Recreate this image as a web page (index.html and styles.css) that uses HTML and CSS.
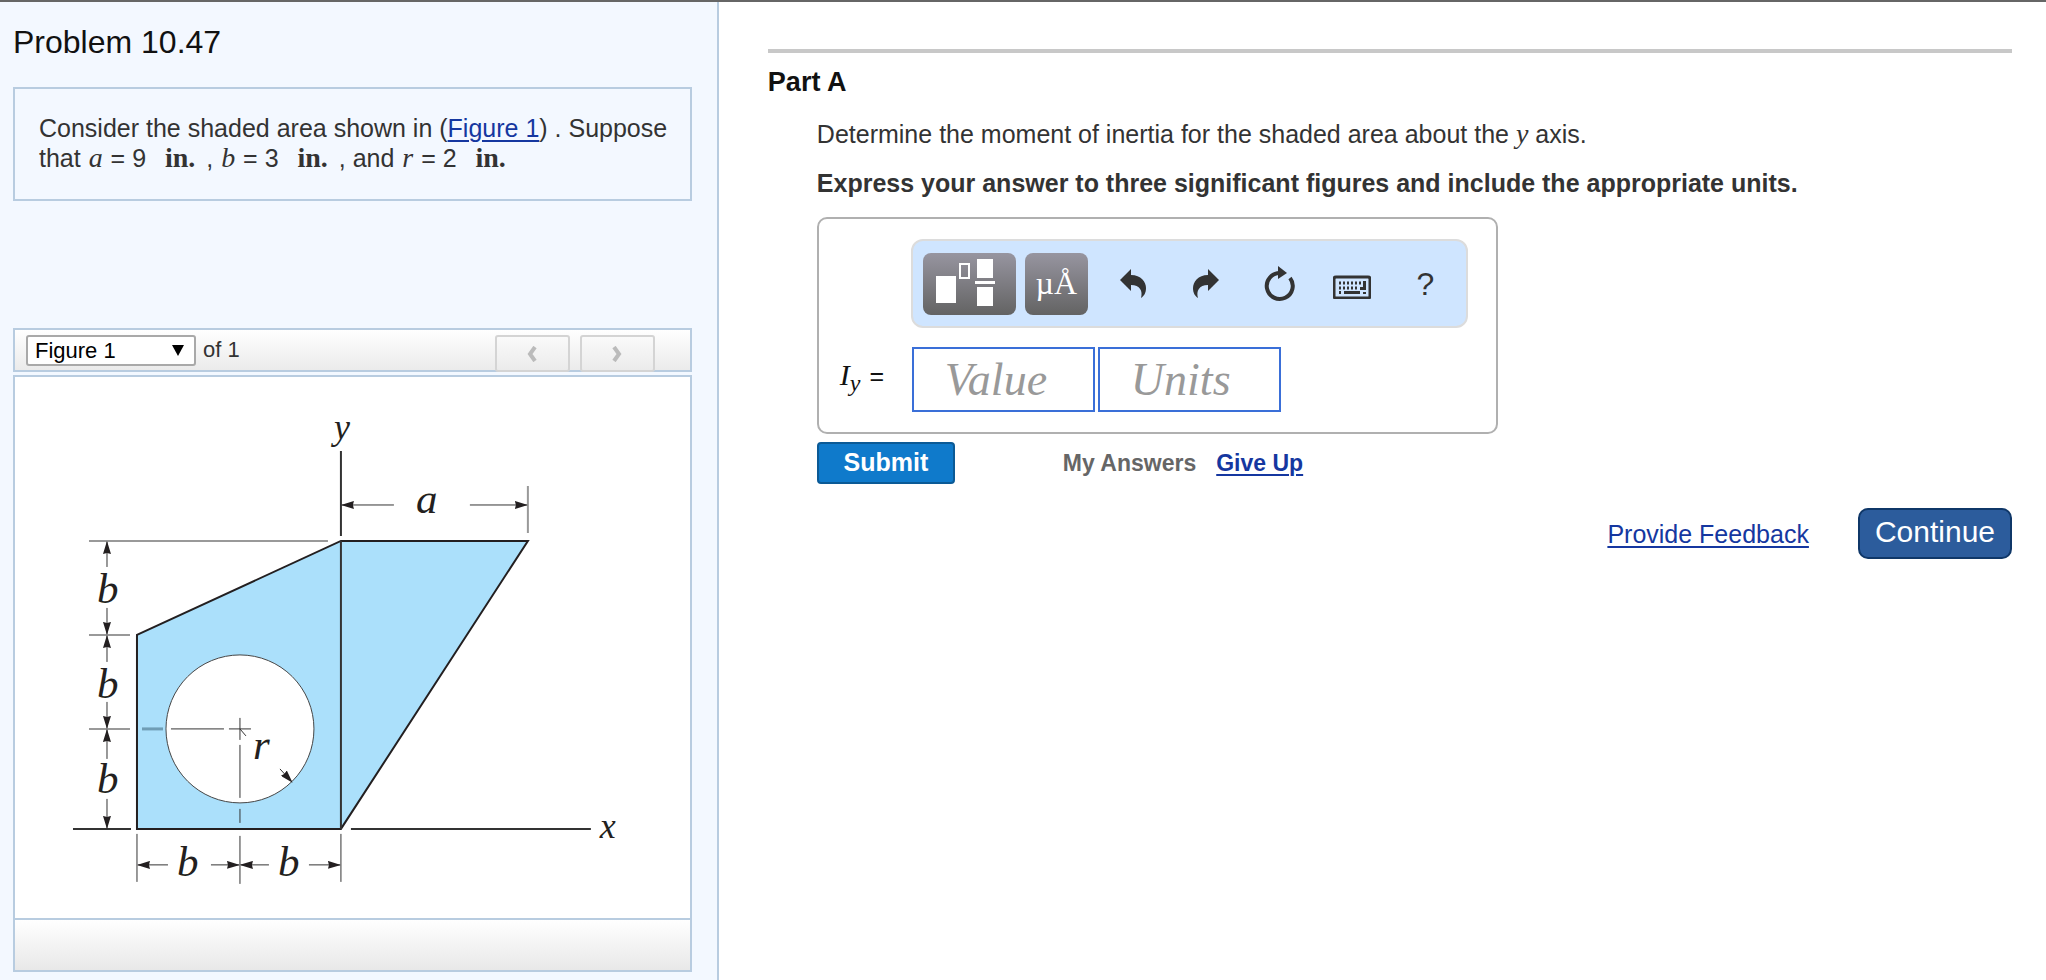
FILE: index.html
```html
<!DOCTYPE html>
<html lang="en">

<head>
    <meta charset="UTF-8">
    <meta name="viewport" content="width=device-width, initial-scale=1.0">
    <title>Problem 10.47</title>
    <link rel="stylesheet" href="styles.css">
</head>

<body>

    <div class="page">

        <aside class="problem">
            <h1>Problem 10.47</h1>

            <div class="statement">
                Consider the shaded area shown in (<a href="#figure">Figure 1</a>) . Suppose that
                <i>a</i> = 9 &nbsp;<b>in.</b> , <i>b</i> = 3 &nbsp;<b>in.</b> , and <i>r</i> = 2 &nbsp;<b>in.</b>
            </div>

            <div class="figure-bar">
                <div class="figure-select">
                    <select id="figureNumber" aria-label="Figure">
                        <option>Figure 1</option>
                    </select>
                </div>
                <label for="figureNumber">of 1</label>
                <div class="figure-nav">
                    <button type="button" aria-label="Previous figure" disabled>
                        <svg width="10" height="16" viewBox="0 0 10 16"><path d="M8 1L3 8l5 7" /></svg>
                    </button>
                    <button type="button" aria-label="Next figure" disabled>
                        <svg width="10" height="16" viewBox="0 0 10 16"><path d="M2 1l5 7-5 7" /></svg>
                    </button>
                </div>
            </div>

            <div class="figure" id="figure">
                <svg class="drawing" viewBox="15 378 675 541">
                    <defs>
                        <marker id="arrow" markerUnits="userSpaceOnUse" markerWidth="13" markerHeight="8" refX="12" refY="4" orient="auto-start-reverse">
                            <path d="M0 0L13 4L0 8L1 4z" fill="#231f20" />
                        </marker>
                    </defs>

                    <!-- shaded area -->
                    <path class="area" d="M137 636L341 542H528L341 830H137z" />
                    <path class="edge" d="M341 542V830" />
                    <circle class="hole" cx="240" cy="730" r="74" />

                    <!-- axes -->
                    <path class="axis" d="M341 452V537M73 830H131M351 830H591" />

                    <!-- extension lines -->
                    <path class="ext" d="M89 542H328M89 636H130M89 730H130M528 487V534" />
                    <path class="thin" d="M137 835V883M240 837V885M341 835V883" />

                    <!-- centre lines -->
                    <path class="dash" d="M142 730H163" />
                    <path class="thin" d="M171 730H224M229 730H251M240 719V741M240 746V799M240 810V824M240 730L246 737" />

                    <!-- dimensions -->
                    <g class="dim">
                        <path d="M394 506H342" />
                        <path d="M470 506H527" />
                        <path d="M107 568V543" />
                        <path d="M107 609V635" />
                        <path d="M107 663V637" />
                        <path d="M107 703V729" />
                        <path d="M107 760V731" />
                        <path d="M107 800V829" />
                        <path d="M168 866H138" />
                        <path d="M211 866H239" />
                        <path d="M269 866H241" />
                        <path d="M309 866H340" />
                        <path d="M280 770L292 783" />
                    </g>

                    <g class="letters">
                        <text x="97" y="604">b</text>
                        <text x="97" y="699">b</text>
                        <text x="97" y="794">b</text>
                        <text x="177" y="877">b</text>
                        <text x="278" y="877">b</text>
                        <text x="416" y="514">a</text>
                        <text x="253" y="760">r</text>
                        <text class="small" x="334" y="440">y</text>
                        <text class="small" x="600" y="839">x</text>
                    </g>
                </svg>
                <div class="figure-footer"></div>
            </div>
        </aside>

        <main class="part">
            <h2>Part A</h2>

            <div class="part-body">
                <p>Determine the moment of inertia for the shaded area about the <i>y</i> axis.</p>
                <p><strong>Express your answer to three significant figures and include the appropriate units.</strong></p>

                <form>
                    <div class="answer">
                        <div class="toolbar">
                            <button type="button" class="template wide" aria-label="Templates">
                                <svg width="93" height="62" viewBox="0 0 93 62">
                                    <path fill="#fff" d="M13 23h20v27H13zM54 6h16v19H54zM54 34h16v19H54zM52 28h20v3H52z" />
                                    <rect x="37" y="11" width="9" height="14" fill="none" stroke="#fff" stroke-width="2" />
                                </svg>
                            </button>
                            <button type="button" class="template" aria-label="Symbols">µÅ</button>
                            <button type="button" class="tool" aria-label="Undo">
                                <svg width="26" height="30" viewBox="0 0 26 30">
                                    <path d="M0 11L11 0V6C21 6 26 13 26 19C26 24 24 27 21 29C23 22 20 16 11 16V22z" />
                                </svg>
                            </button>
                            <button type="button" class="tool" aria-label="Redo">
                                <svg width="26" height="30" viewBox="0 0 26 30">
                                    <path d="M26 11L15 0V6C5 6 0 13 0 19C0 24 2 27 5 29C3 22 6 16 15 16V22z" />
                                </svg>
                            </button>
                            <button type="button" class="tool" aria-label="Reset">
                                <svg width="32" height="36" viewBox="0 0 32 36">
                                    <path d="M17 7A13 13 0 1 0 27 12" fill="none" stroke="#333" stroke-width="4" />
                                    <path d="M15 0L24 7L15 13z" />
                                </svg>
                            </button>
                            <button type="button" class="tool low" aria-label="Keyboard">
                                <svg width="38" height="24" viewBox="0 0 38 24">
                                    <rect x="1" y="2" width="36" height="21" rx="2" fill="none" stroke="#333" stroke-width="3" />
                                    <path d="M6 8H28M6 13H26" fill="none" stroke="#333" stroke-width="3" stroke-dasharray="2 2" />
                                    <path d="M30 6h3v9h-6v-3h3zM6 16h2v3H6zM11 16h16v3H11zM30 17h3v2h-3z" />
                                </svg>
                            </button>
                            <button type="button" class="tool" aria-label="Help">?</button>
                        </div>
                        <div class="fields">
                            <label for="value"><i>I<sub>y</sub></i> =</label>
                            <input type="text" id="value" placeholder="Value">
                            <input type="text" id="units" placeholder="Units" aria-label="Units">
                        </div>
                    </div>

                    <div class="actions">
                        <button type="submit" class="submit">Submit</button>
                        <span class="my-answers">My Answers</span>
                        <a href="#">Give Up</a>
                    </div>
                </form>
            </div>

            <div class="bottom">
                <a href="#">Provide Feedback</a>
                <button type="button" class="continue">Continue</button>
            </div>
        </main>

    </div>

</body>

</html>
```

FILE: styles.css
```css
* {
    box-sizing: border-box;
}

body {
    margin: 0;
    font-family: "Liberation Sans", Arial, sans-serif;
    font-size: 25px;
    line-height: 30px;
    color: #333;
    background-color: #fff;
}

a {
    color: #1537a0;
    text-decoration-thickness: 2px;
    text-underline-offset: 3px;
}

i,
.statement b {
    font-family: "Liberation Serif", "Times New Roman", serif;
    font-size: 28px;
    line-height: 24px;
}

.statement i {
    margin: 0 1px;
}

.statement b {
    margin: 0 4px 0 5px;
}

button {
    font-family: inherit;
    cursor: pointer;
}

.page {
    display: grid;
    grid-template-columns: 13fr 24fr;
    min-height: 100vh;
    border-top: 2px solid #666;
}

/* left side */

.problem {
    padding: 22px 25px 6px 13px;
    background-color: #f3f8ff;
    border-right: 2px solid #b8cce0;
}

h1 {
    margin: 0 0 27px;
    font-size: 32px;
    line-height: 36px;
    font-weight: normal;
    color: #111;
}

.statement {
    margin-bottom: 127px;
    padding: 24px 20px 26px 24px;
    border: 2px solid #b8cce0;
}

.figure-bar {
    display: flex;
    align-items: flex-start;
    height: 44px;
    margin-bottom: 3px;
    padding: 5px 35px 0 11px;
    font-size: 22px;
    border: 2px solid #b8cce0;
    background: linear-gradient(#fff, #ebebeb);
}

.figure-select {
    position: relative;
    margin-right: 7px;
}

.figure-select select {
    display: block;
    width: 170px;
    height: 31px;
    padding: 0 7px;
    font-family: inherit;
    font-size: 22px;
    color: #000;
    appearance: none;
    background-color: #fff;
    border: 2px solid #a9a9a9;
    border-radius: 3px;
}

.figure-select::after {
    content: "";
    position: absolute;
    top: 10px;
    right: 12px;
    border: 6px solid transparent;
    border-top: 11px solid #000;
    border-bottom: 0;
    pointer-events: none;
}

.figure-nav {
    display: flex;
    gap: 10px;
    margin-left: auto;
}

.figure-nav button {
    width: 75px;
    height: 37px;
    padding: 4px 0 0;
    border: 2px solid #d4d4d4;
    border-radius: 3px;
    background: linear-gradient(#fafafa, #ebebeb);
}

.figure-nav svg {
    fill: none;
    stroke: #bbb;
    stroke-width: 4;
}

.figure {
    border: 2px solid #b8cce0;
    background-color: #fff;
}

.figure-footer {
    height: 52px;
    border-top: 2px solid #b8cce0;
    background: linear-gradient(#fff, #e8e8e8);
}

/* drawing */

.drawing {
    display: block;
    width: 100%;
}

.area {
    fill: #abe0fb;
    stroke: #231f20;
    stroke-width: 2;
}

.edge,
.axis {
    fill: none;
    stroke: #333;
    stroke-width: 2;
}

.hole {
    fill: #fff;
    stroke: #444;
    stroke-width: 1;
}

.ext {
    stroke: #999;
    stroke-width: 2;
}

.dash {
    stroke: #6f9db5;
    stroke-width: 3;
}

.thin,
.dim {
    stroke: #333;
    stroke-width: 1;
}

.dim path {
    marker-end: url(#arrow);
}

.letters {
    font-family: "Liberation Serif", "Times New Roman", serif;
    font-style: italic;
    font-size: 43px;
    fill: #231f20;
}

.letters .small {
    font-size: 36px;
}

/* right side */

.part {
    padding: 47px 34px 0 49px;
}

h2 {
    margin: 0;
    padding-top: 14px;
    font-size: 27px;
    line-height: 30px;
    color: #111;
    border-top: 4px solid #c8c8c8;
}

.part-body {
    padding: 22px 0 0 49px;
}

p {
    margin: 0 0 19px;
}

.answer {
    width: 681px;
    max-width: 100%;
    margin-bottom: 8px;
    padding: 20px 28px 20px 21px;
    border: 2px solid #b0b0b0;
    border-radius: 10px;
}

.toolbar {
    display: flex;
    align-items: center;
    height: 89px;
    margin: 0 0 19px 71px;
    padding: 0 4px 0 10px;
    border: 2px solid #dcdcdc;
    border-radius: 12px;
    background-color: #cfe5ff;
}

.template {
    width: 63px;
    height: 62px;
    margin-right: 9px;
    padding: 0;
    border: 0;
    border-radius: 8px;
    font-family: "Liberation Serif", serif;
    font-size: 32px;
    color: #fff;
    background: linear-gradient(#9795a0, #636363);
}

.template.wide {
    width: 93px;
}

.template svg {
    display: block;
}

.tool {
    display: flex;
    flex: 1;
    align-items: center;
    justify-content: center;
    padding: 0;
    border: 0;
    font-size: 32px;
    line-height: 32px;
    color: #333;
    background: none;
}

.tool.low {
    padding-top: 6px;
}

.tool svg {
    fill: #333;
}

.fields {
    display: flex;
    align-items: center;
}

.fields label {
    width: 72px;
    padding-bottom: 8px;
    color: #111;
}

.fields label i {
    margin-right: 2px;
    font-size: 30px;
}

.fields sub {
    font-size: 24px;
    line-height: 0;
    vertical-align: -6px;
}

.fields input {
    width: 183px;
    height: 65px;
    margin-right: 3px;
    padding: 0 31px;
    border: 2px solid #3a6fd8;
    font-family: "Liberation Serif", "Times New Roman", serif;
    font-style: italic;
    font-size: 46px;
}

.fields input::placeholder {
    color: #999;
}

.actions {
    display: flex;
    align-items: center;
    font-size: 23px;
    font-weight: bold;
}

.submit {
    width: 138px;
    height: 42px;
    margin-right: 108px;
    padding: 0 0 2px;
    border: 2px solid #0b5a96;
    border-radius: 4px;
    font-size: 25px;
    font-weight: bold;
    color: #fff;
    background-color: #0f7acb;
}

.my-answers {
    margin-right: 20px;
    color: #666;
}

.bottom {
    display: flex;
    justify-content: flex-end;
    align-items: center;
    gap: 49px;
    margin-top: 24px;
}

.continue {
    height: 51px;
    padding: 0 15px 4px;
    border: 2px solid #0f3768;
    border-radius: 10px;
    font-size: 30px;
    color: #fff;
    background-color: #2c5c9c;
}
```
